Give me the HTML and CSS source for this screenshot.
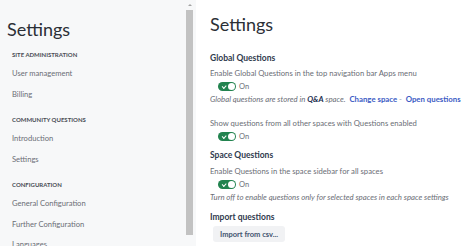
FILE: index.html
```html
<!DOCTYPE html>
<html lang="en">
<head>
  <meta charset="UTF-8">
  <title>Settings</title>
  <link rel="stylesheet" href="styles.css">
</head>
<body>
  <div class="layout">
    <aside class="sidebar">
      <nav class="sidebar-nav">
        <h1 class="sidebar-title">Settings</h1>

        <div class="nav-group">
          <div class="nav-heading">Site administration</div>
          <a class="nav-item">User management</a>
          <a class="nav-item">Billing</a>
        </div>

        <div class="nav-group">
          <div class="nav-heading">Community questions</div>
          <a class="nav-item">Introduction</a>
          <a class="nav-item">Settings</a>
        </div>

        <div class="nav-group">
          <div class="nav-heading">Configuration</div>
          <a class="nav-item">General Configuration</a>
          <a class="nav-item">Further Configuration</a>
          <a class="nav-item">Languages</a>
        </div>
      </nav>
      <div class="scrollbar">
        <div class="scroll-arrow"></div>
        <div class="scroll-thumb"></div>
      </div>
    </aside>

    <main class="content">
      <h2 class="page-title">Settings</h2>

      <section class="section">
        <h3 class="section-title">Global Questions</h3>
        <div class="field-label">Enable Global Questions in the top navigation bar Apps menu</div>
        <div class="toggle-row">
          <span class="toggle"><span class="knob"></span></span>
          <span class="toggle-text">On</span>
        </div>
        <div class="hint">
          Global questions are stored in <b>Q&amp;A</b> space.
          <a class="link">Change space</a> <span class="sep">-</span> <a class="link">Open questions</a>
        </div>

        <div class="field-label spaced">Show questions from all other spaces with Questions enabled</div>
        <div class="toggle-row">
          <span class="toggle"><span class="knob"></span></span>
          <span class="toggle-text">On</span>
        </div>
      </section>

      <section class="section">
        <h3 class="section-title">Space Questions</h3>
        <div class="field-label">Enable Questions in the space sidebar for all spaces</div>
        <div class="toggle-row">
          <span class="toggle"><span class="knob"></span></span>
          <span class="toggle-text">On</span>
        </div>
        <div class="hint">Turn off to enable questions only for selected spaces in each space settings</div>
      </section>

      <section class="section">
        <h3 class="section-title">Import questions</h3>
        <button class="btn">Import from csv...</button>
      </section>
    </main>
  </div>
</body>
</html>
```

FILE: styles.css
```css
* {
  margin: 0;
  padding: 0;
  box-sizing: border-box;
}

:root {
  --text: #42526e;
  --text-muted: #6b6e76;
  --title: #2b2f36;
  --link: #3b5bc4;
  --green: #22834f;
  --sidebar-bg: #f7f8f9;
}

body {
  font-family: 'Lato', 'Open Sans', sans-serif;
  color: var(--text);
  background: #ffffff;
  width: 474px;
  height: 246px;
  overflow: hidden;
}

.layout {
  display: flex;
  height: 246px;
}

/* sidebar */

.sidebar {
  display: flex;
  width: 196px;
  flex-shrink: 0;
  background: var(--sidebar-bg);
  overflow: hidden;
}

.sidebar-nav {
  flex: 1;
  padding: 17px 0 0 12px;
}

.sidebar-title {
  font-size: 18px;
  font-weight: 400;
  color: var(--title);
  line-height: 24px;
  margin: 0 0 9px -5px;
}

.nav-group {
  display: flex;
  flex-direction: column;
  margin-bottom: 11px;
}

.nav-heading {
  font-size: 6px;
  font-weight: 700;
  text-transform: uppercase;
  color: #4a4d55;
  line-height: 10px;
  margin-bottom: 3px;
}

.nav-item {
  font-size: 7.6px;
  color: var(--text-muted);
  line-height: 20.5px;
}

.scrollbar {
  width: 10px;
  padding: 3px 3px 11px 0;
  display: flex;
  flex-direction: column;
  align-items: center;
}

.scroll-arrow {
  width: 0;
  height: 0;
  border-left: 2px solid transparent;
  border-right: 2px solid transparent;
  border-bottom: 2px solid #a3a3a3;
  margin: 1px 0 4px;
}

.scroll-thumb {
  flex: 1;
  width: 7px;
  background: #c2c2c2;
}

/* main */

.content {
  flex: 1;
  padding: 12px 0 0 14px;
  white-space: nowrap;
  overflow: hidden;
}

.page-title {
  font-size: 18px;
  font-weight: 400;
  color: var(--title);
  line-height: 24px;
  margin-bottom: 16px;
}

.section-title {
  font-size: 8.5px;
  font-weight: 700;
  color: #2f3a4d;
  line-height: 12px;
  margin-bottom: 2px;
}

.section + .section .section-title {
  margin-top: 6px;
  margin-bottom: 3px;
}

.section:last-child .section-title {
  margin-top: 8px;
}

.field-label {
  font-size: 7.7px;
  color: var(--text-muted);
  line-height: 14px;
}

.field-label.spaced {
  margin-top: 10px;
}

.toggle-row {
  display: flex;
  align-items: center;
  gap: 3px;
  padding-left: 8px;
  height: 13px;
}

.toggle {
  display: inline-flex;
  align-items: center;
  justify-content: flex-end;
  width: 18px;
  height: 9px;
  border-radius: 5px;
  background: var(--green);
  padding: 1px;
  position: relative;
}

.toggle::before {
  content: '';
  position: absolute;
  left: 4px;
  top: 2.5px;
  width: 3px;
  height: 1.5px;
  border-left: 1px solid #fff;
  border-bottom: 1px solid #fff;
  transform: rotate(-45deg);
}

.knob {
  width: 7px;
  height: 7px;
  border-radius: 50%;
  background: #ffffff;
}

.toggle-text {
  font-size: 7.5px;
  color: var(--text-muted);
}

.hint {
  font-size: 7.8px;
  font-style: italic;
  color: var(--text-muted);
  line-height: 13px;
}

.section:nth-child(3) .hint {
  line-height: 12px;
}

.hint b {
  font-weight: 700;
  color: #172b4d;
}

.link {
  font-style: normal;
  font-weight: 700;
  color: var(--link);
  margin-left: 2px;
}

.sep {
  font-style: normal;
  color: #a0a6b0;
}

.btn {
  display: block;
  font-family: inherit;
  font-size: 7.5px;
  font-weight: 700;
  color: #42526e;
  background: #f1f2f4;
  border: none;
  border-radius: 3px;
  height: 16px;
  padding: 0 7px;
  margin: 3px 0 0 3px;
}
```
